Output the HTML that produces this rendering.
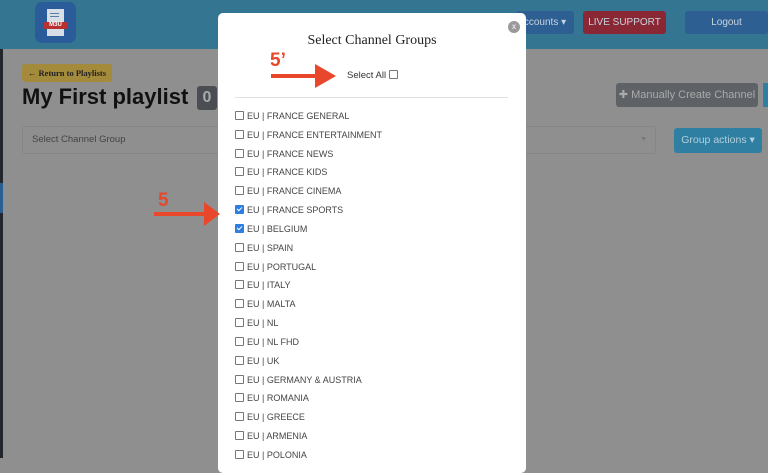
<!DOCTYPE html>
<html><head><style>
body{margin:0;width:768px;height:458px;overflow:hidden;background:#8f8f8f;font-family:"Liberation Sans",sans-serif;position:relative}
.hdr{position:absolute;left:0;top:0;width:768px;height:49px;background:#347592}
.side{position:absolute;left:0;top:49px;width:3px;height:409px;background:#23272b}
.sideb{position:absolute;left:0;top:183px;width:3px;height:30px;background:#2a5f94}
.logo{position:absolute;left:35px;top:2px;width:41px;height:41px;background:#2a5c9a;border-radius:7px}
.btn{position:absolute;color:#c8d3de;font-size:10px;text-align:center;border-radius:3px}
.m{position:absolute;left:218px;top:13px;width:308px;height:460px;background:#fff;border-radius:5px}
.row{position:absolute;left:17px;font-size:9px;color:#444;height:12px;line-height:12px;white-space:nowrap}
.cb{display:inline-block;width:7px;height:7px;border:1px solid #777;border-radius:1px;vertical-align:-1px;margin-right:3px;background:#fff}
.ck{background:#2f7de1;border-color:#2f7de1;position:relative}
.ck:after{content:"";position:absolute;left:2px;top:0px;width:2px;height:4px;border:solid #fff;border-width:0 1px 1px 0;transform:rotate(45deg)}
</style></head><body>
<div class="hdr"></div>
<div class="logo"><div style="position:absolute;left:12px;top:7px;width:17px;height:27px;background:#d8dee6"></div><div style="position:absolute;left:15px;top:11px;width:9px;height:1px;background:#5a7da8;box-shadow:0 3px 0 #5a7da8"></div><div style="position:absolute;left:9px;top:20px;width:23px;height:7px;background:#b8302f;color:#fff;font-size:6px;font-weight:bold;text-align:center;line-height:7px">M3U</div></div>
<div class="btn" style="left:516px;top:11px;width:58px;height:23px;line-height:23px;background:#2d5f93">ccounts ▾</div>
<div class="btn" style="left:583px;top:11px;width:83px;height:23px;line-height:23px;background:#8a2734">LIVE SUPPORT</div>
<div class="btn" style="left:685px;top:11px;width:83px;height:23px;line-height:23px;background:#2d5f93">Logout</div>
<div class="side"></div><div class="sideb"></div>
<div style="position:absolute;left:22px;top:64px;width:90px;height:18px;background:#a48a3b;border-radius:3px;font-family:'Liberation Serif',serif;font-weight:bold;font-size:8.5px;line-height:18px;color:#222;text-align:center;white-space:nowrap">← Return to Playlists</div>
<div style="position:absolute;left:22px;top:84px;font-size:22px;font-weight:bold;color:#111">My First playlist</div>
<div style="position:absolute;left:197px;top:86px;width:20px;height:24px;background:#4a4d52;border-radius:3px;color:#aaa;font-weight:bold;font-size:16px;line-height:24px;text-align:center">0</div>
<div style="position:absolute;left:22px;top:126px;width:632px;height:26px;border:1px solid #868686;border-radius:3px;background:#8f8f8f;font-size:9.5px;color:#444;line-height:26px;text-indent:9px">Select Channel Group<span style="position:absolute;right:8px;color:#777;font-size:7px">▼</span></div>
<div class="btn" style="left:616px;top:83px;width:142px;height:24px;line-height:24px;background:#5e6266;font-size:11px;color:#aaa">✚ Manually Create Channel</div>
<div style="position:absolute;left:763px;top:83px;width:5px;height:24px;background:#2f7fa3"></div>
<div class="btn" style="left:674px;top:128px;width:88px;height:25px;line-height:25px;background:#2f7fa3;font-size:10.5px;color:#b5cfdb">Group actions ▾</div>
<div class="m">
<div style="position:absolute;left:0;width:308px;top:20px;text-align:center;font-family:'Liberation Serif',serif;font-size:14px;color:#222">Select Channel Groups</div>
<div style="position:absolute;left:290px;top:8px;width:12px;height:12px;border-radius:50%;background:#9a9a9a;color:#fff;font-size:8px;line-height:12px;text-align:center">x</div>
<div style="position:absolute;left:129px;top:57px;font-size:9.5px;color:#333">Select All <span class="cb" style="margin:0"></span></div>
<div style="position:absolute;left:17px;top:84px;width:273px;height:1px;background:#e2e2e2"></div>
<div class="row" style="top:97px"><span class="cb"></span>EU | FRANCE GENERAL</div>
<div class="row" style="top:116px"><span class="cb"></span>EU | FRANCE ENTERTAINMENT</div>
<div class="row" style="top:135px"><span class="cb"></span>EU | FRANCE NEWS</div>
<div class="row" style="top:153px"><span class="cb"></span>EU | FRANCE KIDS</div>
<div class="row" style="top:172px"><span class="cb"></span>EU | FRANCE CINEMA</div>
<div class="row" style="top:191px"><span class="cb ck"></span>EU | FRANCE SPORTS</div>
<div class="row" style="top:210px"><span class="cb ck"></span>EU | BELGIUM</div>
<div class="row" style="top:229px"><span class="cb"></span>EU | SPAIN</div>
<div class="row" style="top:248px"><span class="cb"></span>EU | PORTUGAL</div>
<div class="row" style="top:266px"><span class="cb"></span>EU | ITALY</div>
<div class="row" style="top:285px"><span class="cb"></span>EU | MALTA</div>
<div class="row" style="top:304px"><span class="cb"></span>EU | NL</div>
<div class="row" style="top:323px"><span class="cb"></span>EU | NL FHD</div>
<div class="row" style="top:342px"><span class="cb"></span>EU | UK</div>
<div class="row" style="top:361px"><span class="cb"></span>EU | GERMANY &amp; AUSTRIA</div>
<div class="row" style="top:379px"><span class="cb"></span>EU | ROMANIA</div>
<div class="row" style="top:398px"><span class="cb"></span>EU | GREECE</div>
<div class="row" style="top:417px"><span class="cb"></span>EU | ARMENIA</div>
<div class="row" style="top:436px"><span class="cb"></span>EU | POLONIA</div>
</div>
<div style="position:absolute;left:270px;top:50px;font-size:19px;font-weight:bold;color:#e8472c">5’</div>
<svg style="position:absolute;left:270px;top:62px" width="80" height="30"><rect x="1" y="12" width="46" height="4" fill="#e8472c"/><polygon points="45,2 66,14 45,26" fill="#e8472c"/></svg>
<div style="position:absolute;left:158px;top:190px;font-size:19px;font-weight:bold;color:#e8472c">5</div>
<svg style="position:absolute;left:150px;top:200px" width="80" height="30"><rect x="4" y="12" width="54" height="4" fill="#e8472c"/><polygon points="54,2 70,14 54,26" fill="#e8472c"/></svg>
</body></html>
